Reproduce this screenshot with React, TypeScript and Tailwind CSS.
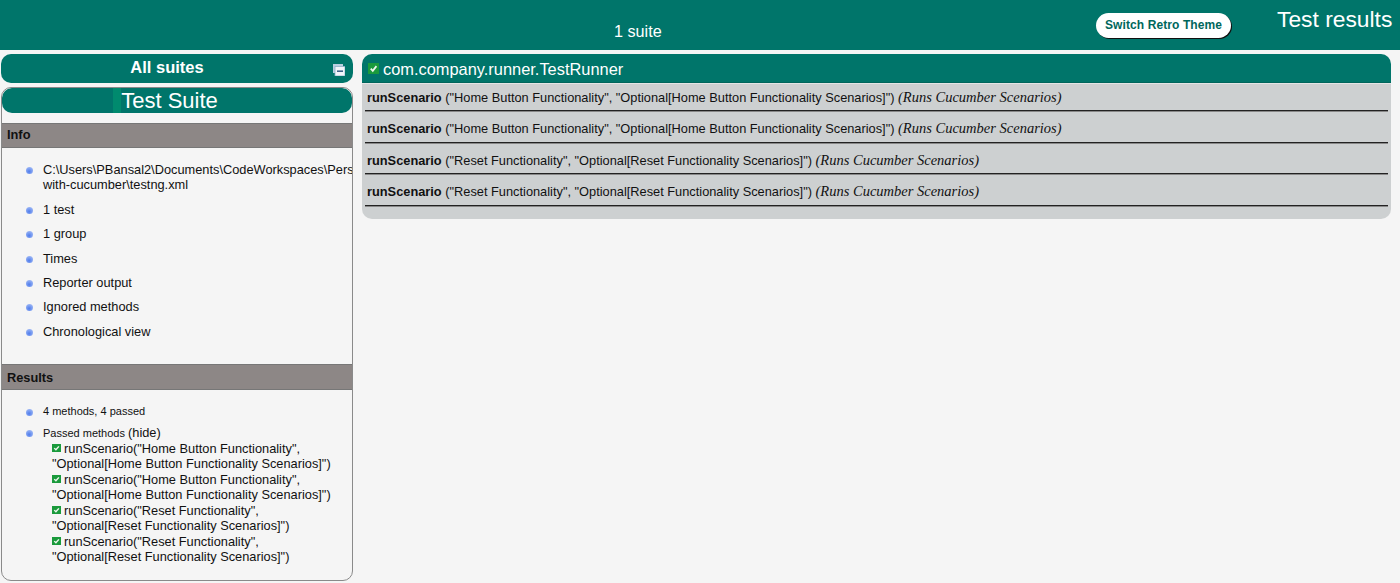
const Check = ({ className = "" }: { className?: string }) => (
  <svg viewBox="0 0 12 12" preserveAspectRatio="none" className={"inline-block " + className}>
    <rect width="12" height="12" fill="#1a9a3c" />
    <path d="M3 6.2 L5.2 8.6 L9.2 3.4" fill="none" stroke="#eef7ee" strokeWidth="1.9" />
  </svg>
);

const Bullet = () => (
  <span className="absolute left-[-17px] top-[5px] w-[7px] h-[7px] rounded-full bg-[radial-gradient(circle_at_45%_65%,#4f7cec,#b5c9f7)]" />
);

const Item = ({ children, className = "" }: { children: React.ReactNode; className?: string }) => (
  <li className={"relative " + className}>
    <Bullet />
    {children}
  </li>
);

const methods = [
  ["Home Button Functionality", "Home Button Functionality Scenarios"],
  ["Home Button Functionality", "Home Button Functionality Scenarios"],
  ["Reset Functionality", "Reset Functionality Scenarios"],
  ["Reset Functionality", "Reset Functionality Scenarios"],
];

export default function App() {
  return (
    <div className="w-[1400px] h-[583px] overflow-hidden bg-[#f5f5f5] text-[12.8px] leading-[15.4px] text-[#111]" style={{ fontFamily: '"Liberation Sans", Arial, sans-serif' }}>
      <header className="h-[50px] bg-[#00756a] flex text-white">
        <div className="w-[1277px] relative">
          <span className="absolute left-[614px] top-[22px] text-[16.2px] leading-[18px]">1 suite</span>
          <button className="absolute left-[1096px] top-[13px] w-[135px] h-[25px] rounded-[13px] bg-white text-[#00665c] text-[12px] font-bold tracking-[0.1px] shadow-[1px_1px_0_#111]">Switch Retro Theme</button>
        </div>
        <div className="text-[22.8px] leading-[25px] pt-[7px]">Test results</div>
      </header>
      <div className="flex pt-[4px]">
        <aside className="w-[352px] ml-[1px] shrink-0">
          <div className="relative h-[29px] rounded-[10px] bg-[#00756a] text-white text-[16.5px] leading-[27px] font-bold text-center pr-[20px]">
            All suites
            <svg viewBox="0 0 12 12" className="absolute right-[8px] top-[10px] w-[12px] h-[12px]">
              <rect x="0" y="0" width="10" height="9" fill="#b9cfe0" />
              <rect x="2" y="2.5" width="10" height="9.5" fill="#f2f6fa" stroke="#8fb0c8" strokeWidth="0.8" />
              <rect x="4" y="6.4" width="6" height="1.6" fill="#41638a" />
            </svg>
          </div>
          <div className="mt-[4px] h-[494px] border border-[#8a8a8a] rounded-[10px] overflow-hidden">
            <div className="h-[25px] rounded-[10px] bg-[#00756a] text-white text-[22px] leading-[25px] flex justify-center pr-[23px]">
              <span className="w-[8px] bg-[#008a6e]" />
              <span>Test Suite</span>
            </div>
            <h2 className="mt-[10px] h-[25px] bg-[#8d8786] font-bold text-[12.8px] leading-[21px] pl-[5px] border-y border-[#777]">Info</h2>
            <ul className="pl-[41px] pt-[14px] whitespace-nowrap overflow-hidden">
              <Item className="mb-[9px]">C:\Users\PBansal2\Documents\CodeWorkspaces\Pers<br />with-cucumber\testng.xml</Item>
              <Item className="mb-[9px]">1 test</Item>
              <Item className="mb-[9px]">1 group</Item>
              <Item className="mb-[9px]">Times</Item>
              <Item className="mb-[9px]">Reporter output</Item>
              <Item className="mb-[9px]">Ignored methods</Item>
              <Item>Chronological view</Item>
            </ul>
            <h2 className="mt-[25px] h-[26px] bg-[#8d8786] font-bold text-[12.8px] leading-[25px] pl-[5px] border-y border-[#777]">Results</h2>
            <ul className="pl-[41px] pt-[14px] whitespace-nowrap">
              <Item className="mb-[5px] text-[11px]">4 methods, 4 passed</Item>
              <Item>
                <span className="text-[11px]">Passed methods </span>(hide)
                <div className="pl-[9px]">
                  {methods.map(([a, b], i) => (
                    <div key={i}>
                      <Check className="w-[9px] h-[8px] mr-[3px] align-[1px]" />runScenario("{a}",
                      <br />
                      "Optional[{b}]")
                    </div>
                  ))}
                </div>
              </Item>
            </ul>
          </div>
        </aside>
        <main className="ml-[9px] w-[1029px]">
          <div className="h-[29px] rounded-t-[10px] bg-[#00756a] text-white text-[16.4px] leading-[29px] flex items-center pl-[6px] gap-[4px] border-b border-[#00665c]">
            <Check className="w-[11px] h-[11px] mt-[1px]" />
            <span className="pt-[2px]">com.company.runner.TestRunner</span>
          </div>
          <div className="h-[136px] rounded-b-[10px] bg-[#cdd0d1] px-[3px] border-t border-[#e5e5e5]">
            {methods.map(([a, b], i) => (
              <div key={i} className="h-[31.5px] pt-[10px] first:h-[27px] first:pt-[6px] pl-[2px] border-b border-[#222] shadow-[0_1px_0_#888]">
                <b>runScenario</b> ("{a}", "Optional[{b}]") <i className="text-[14.5px]" style={{ fontFamily: '"Liberation Serif", serif' }}>(Runs Cucumber Scenarios)</i>
              </div>
            ))}
          </div>
        </main>
      </div>
    </div>
  );
}
